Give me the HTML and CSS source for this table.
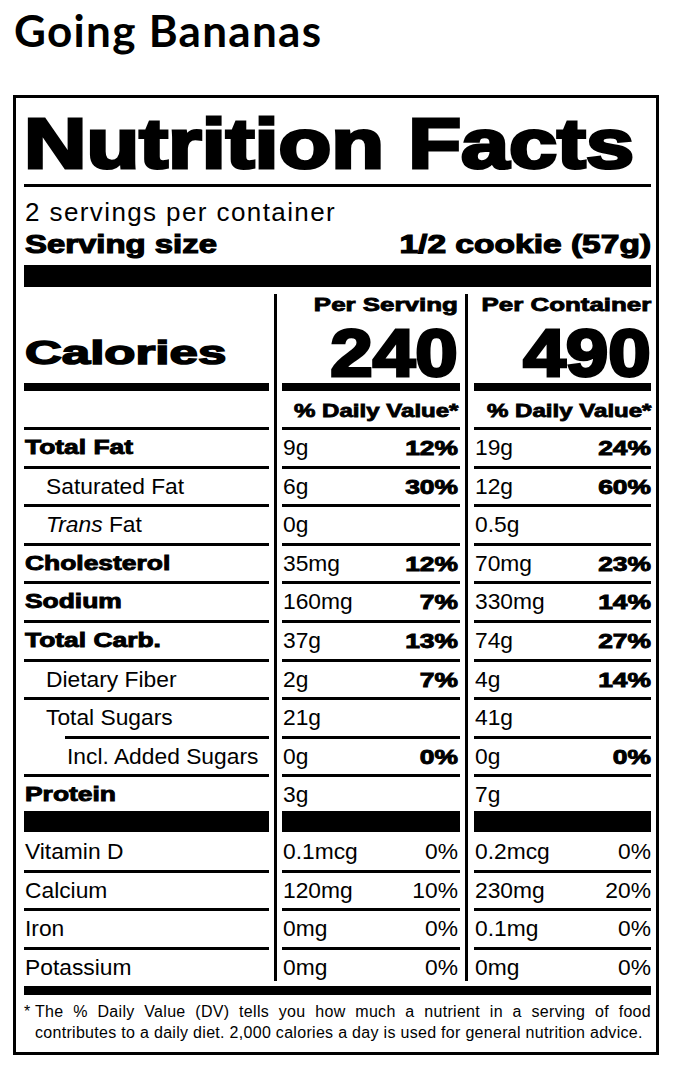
FILE: index.html
```html
<!DOCTYPE html>
<html lang="en">
<head>
<meta charset="utf-8">
<title>Going Bananas – Nutrition Facts</title>
<link rel="stylesheet" href="styles.css">
</head>
<body>
<h1 class="brand">Going Bananas</h1>
<section class="label">
  <h2 class="nf-title"><span class="blk">Nutrition Facts</span></h2>
  <p class="servings">2 servings per container</p>
  <div class="serving-size">
    <span class="blk ss-l">Serving size</span>
    <span class="blk r ss-r">1/2 cookie (57g)</span>
  </div>
  <div class="table">
    <div class="col col-name">
      <div class="hd hd-name"><span class="blk cal">Calories</span></div>
      <div class="dv"></div>
      <div class="row"><span class="blk b">Total Fat</span></div>
      <div class="row in1">Saturated Fat</div>
      <div class="row in1"><span><i>Trans</i> Fat</span></div>
      <div class="row"><span class="blk b">Cholesterol</span></div>
      <div class="row"><span class="blk b">Sodium</span></div>
      <div class="row"><span class="blk b">Total Carb.</span></div>
      <div class="row in1">Dietary Fiber</div>
      <div class="row in1 line-in">Total Sugars</div>
      <div class="row in2">Incl. Added Sugars</div>
      <div class="row bar"><span class="blk b">Protein</span></div>
      <div class="row vit first">Vitamin D</div>
      <div class="row vit">Calcium</div>
      <div class="row vit">Iron</div>
      <div class="row end">Potassium</div>
    </div>
    <div class="col col-val col-serv">
      <div class="hd"><span class="blk r ph">Per Serving</span><span class="blk r big">240</span></div>
      <div class="dv"><span class="blk r dvt">% Daily Value*</span></div>
      <div class="row"><span>9g</span><span class="blk r b">12%</span></div>
      <div class="row"><span>6g</span><span class="blk r b">30%</span></div>
      <div class="row"><span>0g</span></div>
      <div class="row"><span>35mg</span><span class="blk r b">12%</span></div>
      <div class="row"><span>160mg</span><span class="blk r b">7%</span></div>
      <div class="row"><span>37g</span><span class="blk r b">13%</span></div>
      <div class="row"><span>2g</span><span class="blk r b">7%</span></div>
      <div class="row"><span>21g</span></div>
      <div class="row"><span>0g</span><span class="blk r b">0%</span></div>
      <div class="row bar"><span>3g</span></div>
      <div class="row vit first"><span>0.1mcg</span><span>0%</span></div>
      <div class="row vit"><span>120mg</span><span>10%</span></div>
      <div class="row vit"><span>0mg</span><span>0%</span></div>
      <div class="row end"><span>0mg</span><span>0%</span></div>
    </div>
    <div class="col col-val col-cont">
      <div class="hd"><span class="blk r ph pc">Per Container</span><span class="blk r big">490</span></div>
      <div class="dv"><span class="blk r dvt">% Daily Value*</span></div>
      <div class="row"><span>19g</span><span class="blk r b">24%</span></div>
      <div class="row"><span>12g</span><span class="blk r b">60%</span></div>
      <div class="row"><span>0.5g</span></div>
      <div class="row"><span>70mg</span><span class="blk r b">23%</span></div>
      <div class="row"><span>330mg</span><span class="blk r b">14%</span></div>
      <div class="row"><span>74g</span><span class="blk r b">27%</span></div>
      <div class="row"><span>4g</span><span class="blk r b">14%</span></div>
      <div class="row"><span>41g</span></div>
      <div class="row"><span>0g</span><span class="blk r b">0%</span></div>
      <div class="row bar"><span>7g</span></div>
      <div class="row vit first"><span>0.2mcg</span><span>0%</span></div>
      <div class="row vit"><span>230mg</span><span>20%</span></div>
      <div class="row vit"><span>0.1mg</span><span>0%</span></div>
      <div class="row end"><span>0mg</span><span>0%</span></div>
    </div>
  </div>
  <div class="bottom-bar"></div>
  <p class="foot"><span class="ast">*</span>The % Daily Value (DV) tells you how much a nutrient in a serving of food contributes to a daily diet. 2,000 calories a day is used for general nutrition advice.</p>
</section>
</body>
</html>
```

FILE: styles.css
```css
* { box-sizing: border-box; }
html, body { margin: 0; background: #fff; }
body {
  padding: 0 0 0 13px;
  color: #000;
  font-family: "Liberation Sans", Arial, sans-serif;
}

.brand {
  margin: 7px 0 42px 1px;
  font: 700 44px/46px Lato, "Liberation Sans", sans-serif;
  letter-spacing: 1.3px;
  color: #000;
}

/* heavy "black" face: bold + stroke + horizontal stretch */
.blk {
  display: inline-block;
  font-family: "Liberation Sans", Arial, sans-serif;
  font-weight: 700;
  -webkit-text-stroke: .045em #000;
  transform: scaleX(var(--sx, 1.3));
  transform-origin: 0 50%;
  white-space: nowrap;
}
.blk.r { transform-origin: 100% 50%; }

.label {
  width: 646px;
  border: 3px solid #000;
  padding: 11px 5px 9px 8px;
}

.nf-title {
  margin: 0;
  padding: 0 0 5px 0;
  border-bottom: 3px solid #000;
  font-size: 70px;
  line-height: 70px;
  font-weight: 700;
}
.nf-title .blk { --sx: 1.235; }

.servings {
  margin: 12px 0 0 1px;
  font-size: 26px;
  line-height: 26px;
  letter-spacing: 1.4px;
}

.serving-size {
  margin-top: 6px;
  padding: 0 0 8px 1px;
  border-bottom: 22px solid #000;
  display: flex;
  justify-content: space-between;
  font-size: 26px;
  line-height: 26px;
}
.ss-l { --sx: 1.265; }
.ss-r { --sx: 1.29; }

.table {
  margin-top: 7px;
  display: flex;
  align-items: stretch;
}
.col { display: flex; flex-direction: column; flex: none; }
.col-name { width: 245px; }
.col-serv {
  width: 186px;
  margin-left: 5px;
  border-left: 3px solid #000;
  padding-left: 5px;
}
.col-cont {
  width: 186px;
  margin-left: 5px;
  border-left: 3px solid #000;
  padding-left: 6px;
}

.hd {
  height: 97px;
  border-bottom: 8px solid #000;
  display: flex;
  flex-direction: column;
  align-items: flex-end;
  padding: 1px 2px 0 0;
}
.col-cont .hd { padding-right: 0; }
.hd-name { align-items: flex-start; padding: 41px 0 0 1px; }
.cal { font-size: 34px; line-height: 34px; --sx: 1.5; }
.ph { font-size: 18.5px; line-height: 20px; --sx: 1.4; }
.big { font-size: 67px; line-height: 56px; margin-top: 10px; --sx: 1.14; }

.dv {
  height: 39px;
  border-bottom: 3px solid #000;
  padding: 4px 2px 0 0;
  line-height: 32px;
  text-align: right;
}
.col-cont .dv { padding-right: 0; }
.dvt { font-size: 18.5px; --sx: 1.3; }

.row {
  height: 38.6px;
  border-bottom: 3px solid #000;
  padding: 0 2px 0 1px;
  display: flex;
  justify-content: space-between;
  align-items: baseline;
  font-size: 22.8px;
  line-height: 35px;
}
.col-cont .row { padding-right: 0; }
.row .b { font-size: 20px; --sx: 1.32; }
.row.in1 { padding-left: 22px; }
.row.in2 { padding-left: 43px; }
.row.line-in {
  border-bottom: 0;
  background: linear-gradient(#000, #000) 41px 100% / calc(100% - 41px) 3px no-repeat;
}
.row.bar { height: 54.6px; border-bottom-width: 21px; }
.row.vit { height: 38.4px; }
.row.vit.first { height: 41px; padding-top: 2px; }
.row.end { height: 31px; border-bottom: 0; }

.bottom-bar {
  margin-top: 5px;
  height: 9px;
  background: #000;
}

.foot {
  margin: 6px 0 0;
  padding-left: 11px;
  text-indent: -11px;
  font-size: 16px;
  line-height: 21px;
  letter-spacing: .3px;
  text-align: justify;
}
.ast { display: inline-block; width: 11px; text-indent: 0; }
```
